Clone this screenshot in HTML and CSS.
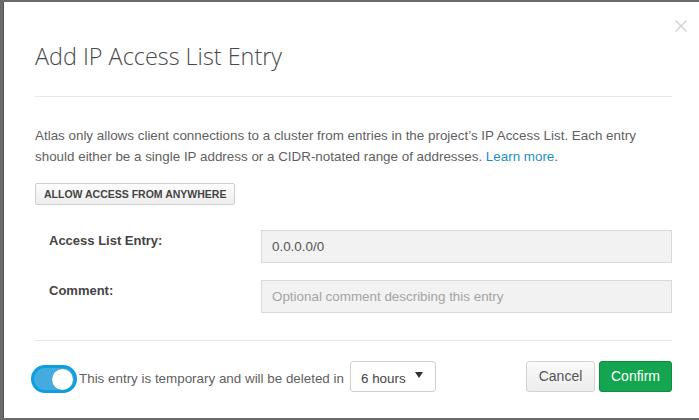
FILE: index.html
```html
<!DOCTYPE html>
<html>
<head>
<meta charset="utf-8">
<link rel="stylesheet" href="styles.css">
</head>
<body>
<div class="backdrop">
  <div class="modal">
    <button class="close" aria-label="Close">
      <svg width="12" height="12" viewBox="0 0 12 12"><path d="M0.5 0.5L11.5 11.5M11.5 0.5L0.5 11.5" stroke="#cfcfcf" stroke-width="1.3" fill="none"/></svg>
    </button>
    <h1 class="title">Add IP Access List Entry</h1>
    <hr class="sep">
    <p class="desc">Atlas only allows client connections to a cluster from entries in the project’s IP Access List. Each entry should either be a single IP address or a CIDR-notated range of addresses. <a href="#">Learn more</a>.</p>
    <button class="btn-small">ALLOW ACCESS FROM ANYWHERE</button>
    <div class="form">
      <div class="row">
        <label class="label">Access List Entry:</label>
        <div class="input">0.0.0.0/0</div>
      </div>
      <div class="row">
        <label class="label">Comment:</label>
        <div class="input placeholder">Optional comment describing this entry</div>
      </div>
    </div>
    <hr class="sep sep2">
    <div class="footer">
      <div class="toggle"><div class="knob"></div></div>
      <span class="temp">This entry is temporary and will be deleted in</span>
      <div class="select">6 hours <span class="caret"></span></div>
      <div class="spacer"></div>
      <button class="btn cancel">Cancel</button>
      <button class="btn confirm">Confirm</button>
    </div>
  </div>
</div>
</body>
</html>
```
FILE: styles.css
```css
html, body {
  margin: 0;
  padding: 0;
  width: 699px;
  height: 420px;
  overflow: hidden;
  background: #6b6b6b;
}
.backdrop {
  padding: 2px 0 0 3px;
  height: 418px;
  box-sizing: border-box;
}
.modal {
  position: relative;
  background: #fff;
  height: 100%;
  box-sizing: border-box;
  padding: 0 27px 0 31px;
  font-family: "Liberation Sans", Arial, sans-serif;
  color: #5b5b5b;
  border-left: 1px solid #555;
}
.close {
  position: absolute;
  top: 18px;
  right: 12px;
  border: 0;
  background: none;
  padding: 0;
  width: 12px;
  height: 12px;
  display: flex;
}
.title {
  margin: 0;
  padding-top: 39px;
  font-family: "Open Sans", sans-serif;
  font-weight: 300;
  font-size: 23.4px;
  line-height: 30px;
  color: #4a4a4a;
  height: 30px;
  padding-bottom: 25px;
}
.sep {
  border: 0;
  border-top: 1px solid #e8e8e8;
  margin: 0;
}
.desc {
  margin: 28px 0 0 0;
  font-size: 13.4px;
  line-height: 21px;
  color: #5f5f5f;
}
.desc a {
  color: #1e8ec4;
  text-decoration: none;
}
.btn-small {
  margin-top: 16px;
  font-family: "Liberation Sans", Arial, sans-serif;
  font-weight: bold;
  font-size: 10.5px;
  color: #444;
  height: 22px;
  padding: 0 8px;
  border: 1px solid #cfcfcf;
  border-radius: 2px;
  background: linear-gradient(#fdfdfd, #ededed);
  display: block;
}
.form {
  margin-top: 25px;
  display: flex;
  flex-direction: column;
  gap: 17px;
}
.row {
  display: flex;
  align-items: flex-start;
}
.label {
  width: 212px;
  padding-left: 14px;
  font-weight: bold;
  font-size: 13px;
  color: #444;
  line-height: 20px;
  padding-top: 1px;
}
.input {
  flex: 1;
  height: 33px;
  box-sizing: border-box;
  background: #f2f2f2;
  border: 1px solid #dadada;
  font-size: 13.4px;
  line-height: 31px;
  padding-left: 10px;
  color: #555;
}
.input.placeholder {
  color: #a4a4a4;
}
.sep2 {
  margin-top: 27px;
}
.footer {
  display: flex;
  align-items: flex-start;
  margin-top: 20px;
  margin-left: -4px;
}
.toggle {
  margin-top: 4px;
  width: 46px;
  height: 28px;
  box-sizing: border-box;
  border-radius: 14px;
  border: 3px solid #0e9fe0;
  background: #43abe0;
  display: flex;
  justify-content: flex-end;
  align-items: center;
  padding: 0 1px;
}
.knob {
  width: 21px;
  height: 21px;
  border-radius: 50%;
  background: #fff;
  box-shadow: 0 0 1px rgba(0,0,0,0.3);
}
.temp {
  margin-top: 4px;
  line-height: 28px;
  margin-left: 2px;
  font-size: 13.4px;
  color: #5f5f5f;
}
.select {
  margin-left: 6px;
  width: 86px;
  height: 31px;
  box-sizing: border-box;
  border: 1px solid #cfcfcf;
  border-radius: 3px;
  font-size: 13.4px;
  color: #444;
  padding: 9px 0 0 10px;
  position: relative;
}
.caret {
  position: absolute;
  top: 10px;
  right: 12px;
  width: 0;
  height: 0;
  border-left: 4px solid transparent;
  border-right: 4px solid transparent;
  border-top: 6px solid #333;
}
.spacer {
  flex: 1;
}
.btn {
  height: 31px;
  font-family: "Liberation Sans", Arial, sans-serif;
  font-size: 14px;
  border-radius: 3px;
  padding: 0 0 2px 0;
}
.cancel {
  width: 69px;
  border: 1px solid #d3d3d3;
  background: linear-gradient(#fafafa, #ececec);
  color: #555;
}
.confirm {
  margin-left: 4px;
  width: 73px;
  border: 1px solid #0e8a43;
  background: #14a550;
  color: #fff;
}
```
